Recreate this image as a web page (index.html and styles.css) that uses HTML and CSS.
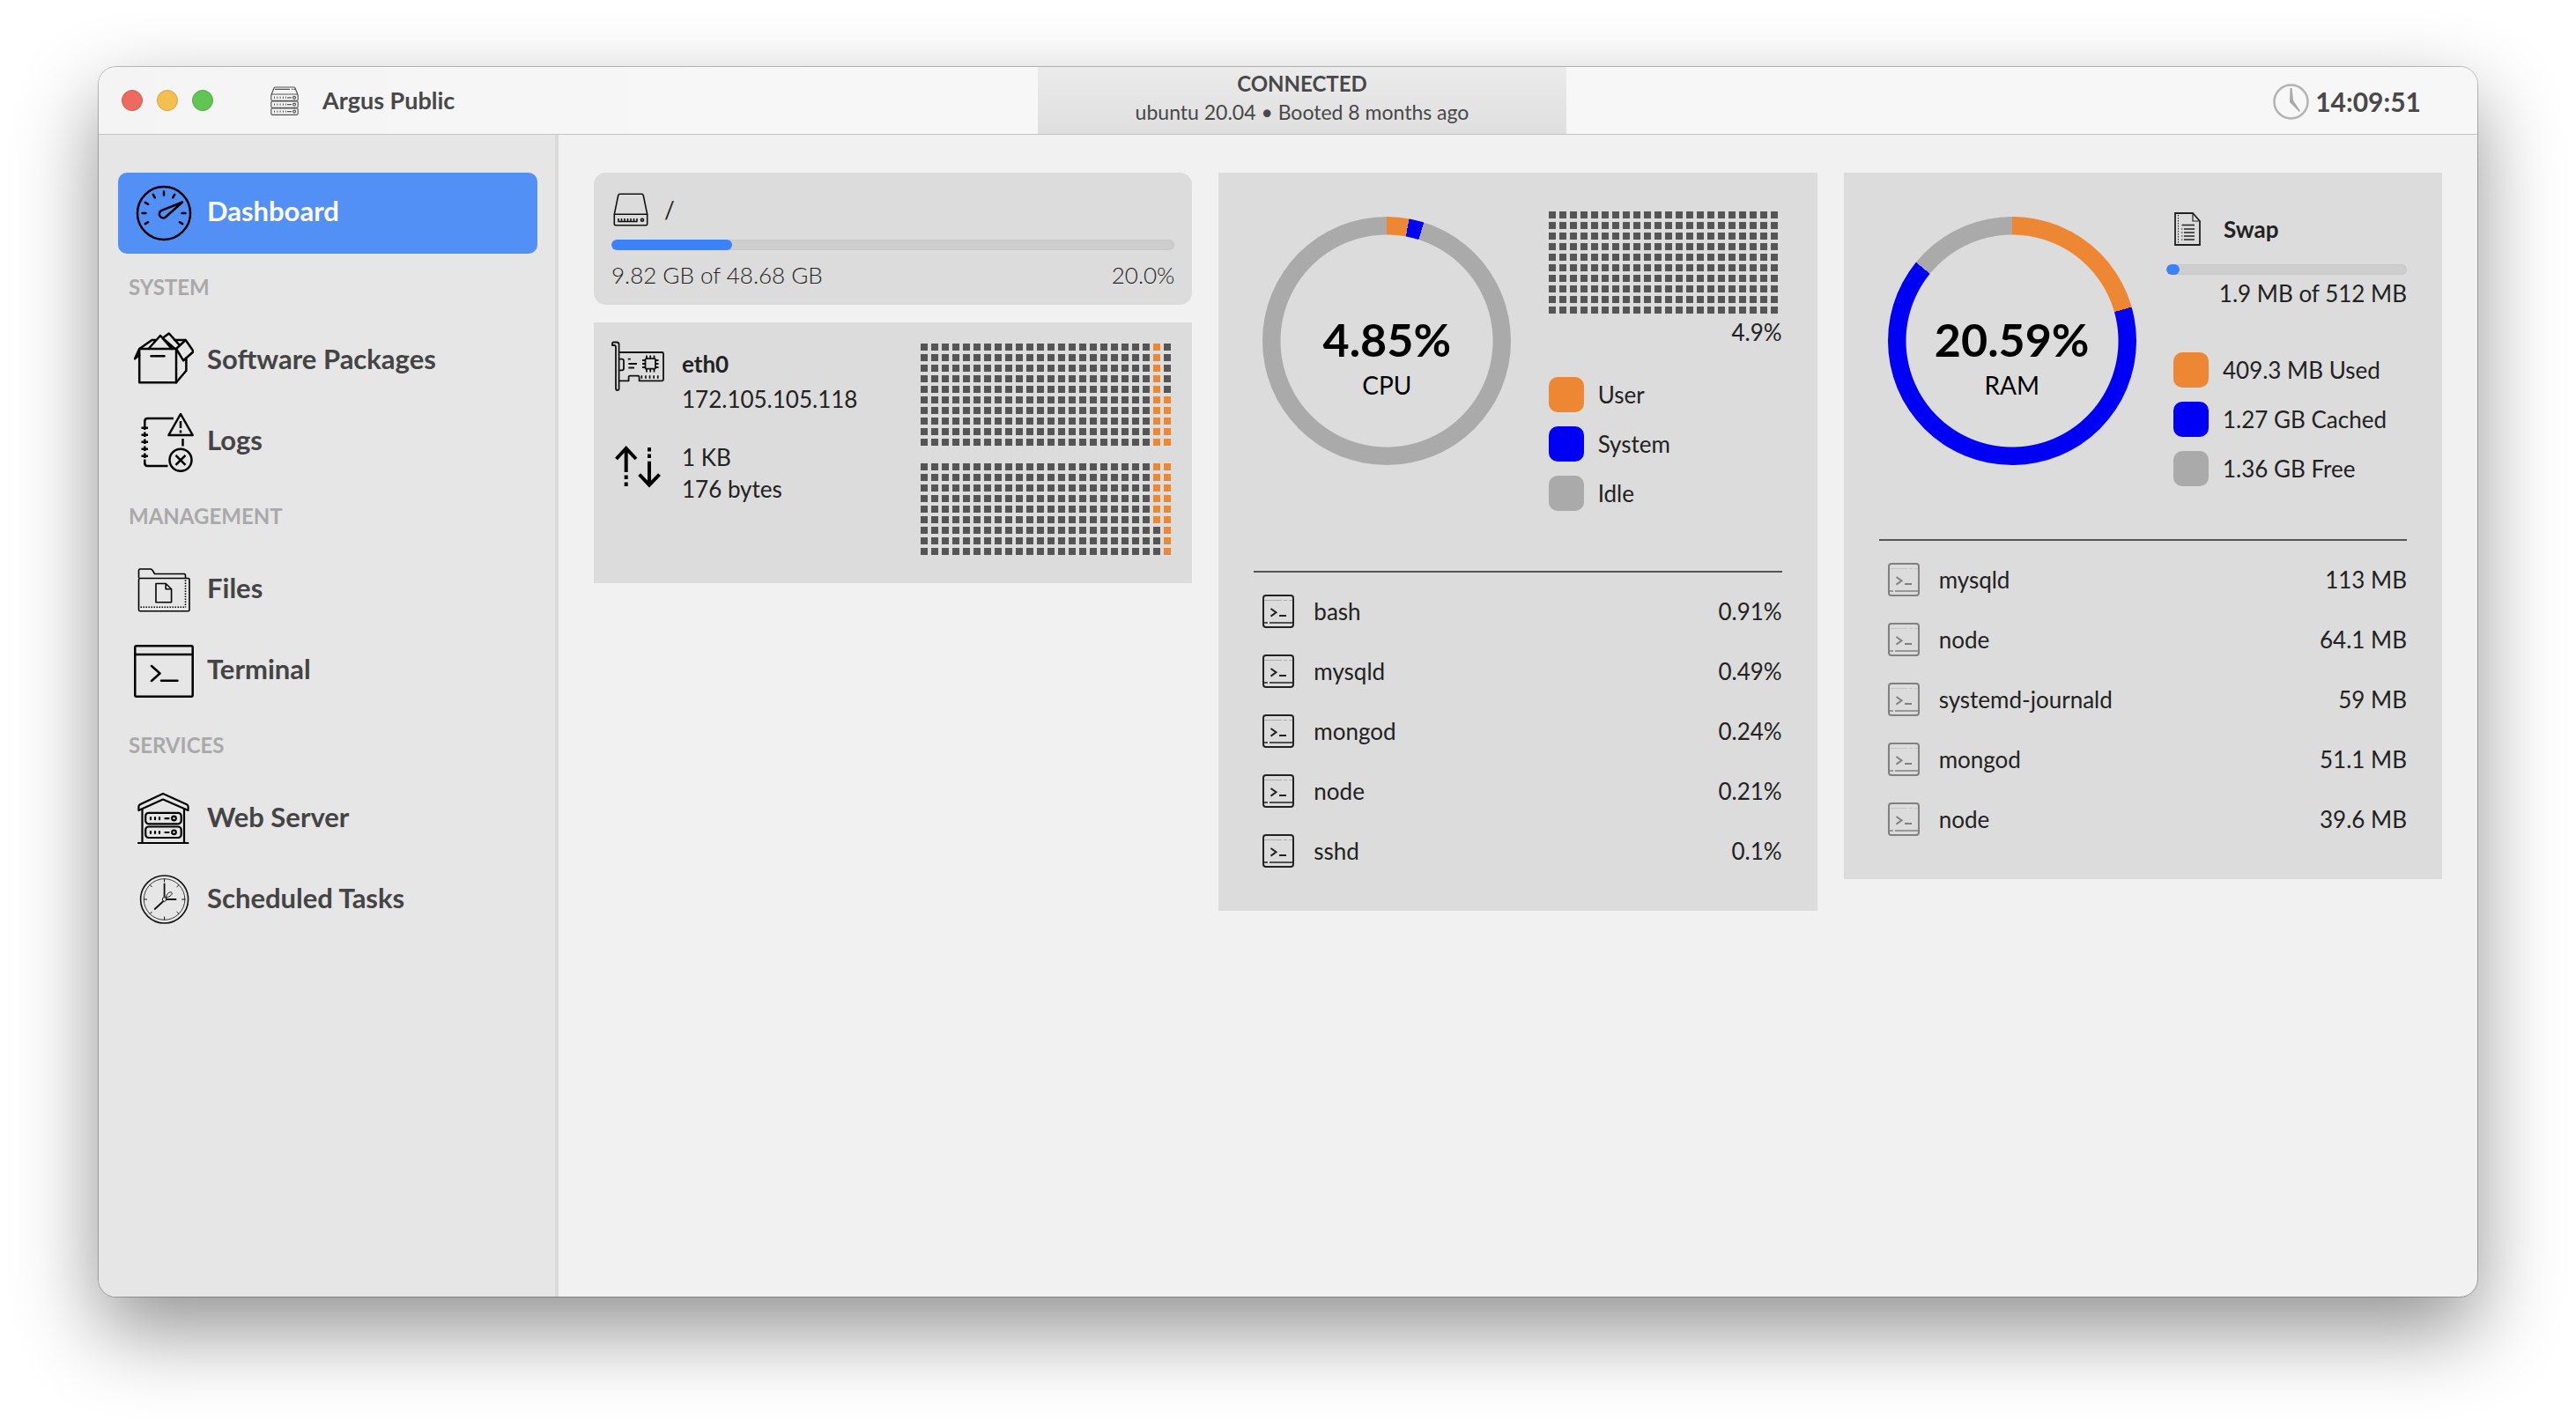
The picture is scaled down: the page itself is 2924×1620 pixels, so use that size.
FILE: index.html
```html
<!DOCTYPE html>
<html lang="en">
<head>
<meta charset="utf-8">
<title>Argus Public</title>
<link rel="stylesheet" href="styles.css">
</head>
<body>
<svg class="defs" width="0" height="0" aria-hidden="true">
  <defs>
    <pattern id="dots-off" width="12" height="12" patternUnits="userSpaceOnUse"><rect width="8" height="8" fill="#555"/></pattern>
    <pattern id="dots-on" width="12" height="12" patternUnits="userSpaceOnUse"><rect width="12" height="12" fill="#dcdcdc"/><rect width="8" height="8" fill="#ee8733"/></pattern>
    <symbol id="process" viewBox="0 0 36 38">
      <g fill="none" stroke="currentColor">
        <rect x="1" y="1" width="34" height="36" rx="3" stroke-width="2"/>
        <path d="M2 6.500h20M24 6.500h4M30 6.500h4" opacity=".25"/>
        <path d="M2 32h4M8 32h26" stroke-width="1.300"/>
        <path d="M9.500 16l6 4.300-6 4.300" stroke-width="2"/>
        <path d="M19 24h8" stroke-width="2"/>
      </g>
    </symbol>
  </defs>
</svg>

<div class="window">
  <header class="titlebar">
    <div class="titlebar-left">
      <div class="lights">
        <button class="light light-close" type="button" aria-label="Close"></button>
        <button class="light light-min" type="button" aria-label="Minimize"></button>
        <button class="light light-zoom" type="button" aria-label="Zoom"></button>
      </div>
      <svg class="server-icon" viewBox="0 0 32 33" aria-hidden="true">
        <g fill="none" stroke="#555" stroke-width="1.200">
          <path d="M1 9.500L4 2Q4.500 1 5.500 1h21q1 0 1.500 1l3 7.500"/>
          <path d="M5 3.300h17M24 3.300h1.500M26.500 3.300h1.500"/>
          <rect x=".8" y="9" width="30.400" height="7.300" rx="1.500"/>
          <rect x=".8" y="17" width="30.400" height="7.300" rx="1.500"/>
          <rect x=".8" y="25" width="30.400" height="7.300" rx="1.500"/>
          <path d="M4 12.800h14M4 20.600h14M4 28.600h14" stroke-width="2.400" stroke-dasharray="1 2.300"/>
          <path d="M19 12.800h5M19 20.600h5M19 28.600h5"/>
          <circle cx="27" cy="12.800" r="1.500"/><circle cx="27" cy="20.600" r="1.500"/><circle cx="27" cy="28.600" r="1.500"/>
        </g>
      </svg>
      <h1 class="title">Argus Public</h1>
    </div>
    <div class="status">
      <p class="status-state">CONNECTED</p>
      <p class="status-info">ubuntu 20.04 • Booted 8 months ago</p>
    </div>
    <div class="titlebar-right">
      <svg class="clock-icon" viewBox="0 0 41 41" aria-hidden="true">
        <circle cx="20.500" cy="20.500" r="19" fill="none" stroke="#b3b3b3" stroke-width="2.500"/>
        <path d="M19.500 5h2l1.500 14 8 12-1 1-11-11z" fill="#a9a9a9"/>
      </svg>
      <time class="clock">14:09:51</time>
    </div>
  </header>

  <div class="body">
    <nav class="sidebar" aria-label="Sections">
      <a class="nav-item nav-item-active" href="#dashboard" aria-current="page">
        <svg class="nav-icon" viewBox="0 0 68 68" aria-hidden="true">
          <g fill="none" stroke="#000" stroke-width="2.500" stroke-linecap="round" stroke-linejoin="round">
            <circle cx="34" cy="34" r="30"/>
            <path d="M34 13.500V9.500M23.800 16.300l-2-3.400M16.200 23.800l-3.400-2M13.500 34H9.500M16.200 44.200l-3.400 2M44.200 16.300l2-3.400M54.500 34h4M51.800 44.200l3.400 2"/>
            <path d="M55 21.500L31.500 30.800A4.500 4.500 0 1 0 37 37.500z"/>
          </g>
        </svg>
        <span>Dashboard</span>
      </a>

      <h2 class="nav-heading">SYSTEM</h2>
      <a class="nav-item" href="#packages">
        <svg class="nav-icon" viewBox="0 0 68 68" aria-hidden="true">
          <g fill="none" stroke="#000" stroke-width="2.500" stroke-linejoin="round" stroke-linecap="round">
            <path d="M6.200 20H48v38.300H6.200zM19.500 28.300h15"/>
            <path d="M6.200 20L1 31.300 6.200 27M6.200 20L20.500 10h5M16.600 20L30 5l13 15"/>
            <path d="M33 7.500l6.800-5 11.800 13.200M34.500 9.500L46 19.500M46 10h12.700l9 13-11.500 10.300L48 20 58.700 10"/>
            <path d="M59.400 30.500v14.200L48 58.300"/>
          </g>
        </svg>
        <span>Software Packages</span>
      </a>
      <a class="nav-item" href="#logs">
        <svg class="nav-icon" viewBox="0 0 68 68" aria-hidden="true">
          <g fill="none" stroke="#000" stroke-width="2.500" stroke-linejoin="round">
            <path d="M45 7H15.500q-3.200 0-3.200 3.200V20M12.300 22.500v5.500M12.300 30.500v5.500M12.300 38.500v5.500M12.300 46.500v5.500M12.300 53.500v4.300q0 3.200 3.200 3.200h23"/>
            <path d="M8.500 17.700H16M8.500 25.700H16M8.500 33.700H16M8.500 41.700H16M8.500 49.700H16M55.500 30v8.500"/>
            <path d="M53 2l13.700 24H39.400zM53 10v8M53 20.500v3"/>
            <circle cx="53" cy="54.300" r="12.500"/>
            <path d="M47.500 48.800l11 11M58.500 48.800l-11 11"/>
          </g>
        </svg>
        <span>Logs</span>
      </a>

      <h2 class="nav-heading">MANAGEMENT</h2>
      <a class="nav-item" href="#files">
        <svg class="nav-icon" viewBox="0 0 68 68" aria-hidden="true">
          <g fill="none" stroke="#000" stroke-width="1.600" stroke-linejoin="round">
            <path d="M5.500 20v-8.500q0-1.500 1.500-1.500h11.500q2 0 3 2l2 3.500H57q1.500 0 1.500 1.500v3"/>
            <rect x="5.500" y="20.500" width="57.500" height="37.200" rx="1.500"/>
            <path d="M25 26.500h11.200l6.400 6.200v15H25zM36.200 26.500v6.200h6.400"/>
            <path d="M58.500 22.500v31M7.500 53.300h51" stroke-dasharray="1.500 1.500"/>
          </g>
        </svg>
        <span>Files</span>
      </a>
      <a class="nav-item" href="#terminal">
        <svg class="nav-icon" viewBox="0 0 68 68" aria-hidden="true">
          <g fill="none" stroke="#000" stroke-width="2.500" stroke-linejoin="round" stroke-linecap="round">
            <rect x="1.300" y="5.200" width="65.400" height="57.500" rx="1.500"/>
            <path d="M1.300 15h65.400M20 28l9.500 8.500L20 45M31 44.700h18.500"/>
          </g>
        </svg>
        <span>Terminal</span>
      </a>

      <h2 class="nav-heading">SERVICES</h2>
      <a class="nav-item" href="#web">
        <svg class="nav-icon" viewBox="0 0 68 68" aria-hidden="true">
          <g fill="none" stroke="#000" stroke-width="2.200" stroke-linejoin="round" stroke-linecap="round">
            <path d="M33 5L60 17.300q1.600.8 1.600 2.500V24L33 11.500 5.400 24V19.800q0-1.700 1.600-2.500z"/>
            <path d="M9.500 23v38M57 23v38M5 61h56.500"/>
            <rect x="13.200" y="26.800" width="40.500" height="12.500" rx="3.500"/>
            <rect x="13.200" y="42.500" width="40.500" height="12.500" rx="3.500"/>
            <path d="M19 32.200v2M24 32.200v2M29 32.200v2M35.500 33.200h4M19 48v2M24 48v2M29 48v2M35.500 49h4"/>
            <circle cx="45.500" cy="33" r="2.300"/><circle cx="45.500" cy="48.800" r="2.300"/>
          </g>
        </svg>
        <span>Web Server</span>
      </a>
      <a class="nav-item" href="#tasks">
        <svg class="nav-icon" viewBox="0 0 68 68" aria-hidden="true">
          <g fill="none" stroke="#111" stroke-linecap="round">
            <circle cx="34.600" cy="33" r="27" stroke-width="1.600"/>
            <circle cx="34.600" cy="33" r="23.300" stroke-width=".8"/>
            <path d="M34.600 10v3M34.600 53v3M11.600 33h3M54.600 33h3M18.300 16.700l2 2M50.900 16.700l-2 2M18.300 49.300l2-2M50.900 49.300l-2-2" stroke-width="1"/>
            <path d="M34.600 30V15.500M37.500 33H47.500M33 35.500L23.700 44" stroke-width="1.800"/>
            <circle cx="34.600" cy="33" r="2.300" stroke-width="1"/>
            <path d="M36.500 31c0-4 4-7 6-6s0 5-6 6" stroke-width="1"/>
          </g>
        </svg>
        <span>Scheduled Tasks</span>
      </a>
    </nav>

    <main class="main">
      <div class="column">
        <section class="card disk">
          <div class="disk-name">
            <svg class="disk-icon" viewBox="0 0 40 38" aria-hidden="true">
              <g fill="none" stroke="#111" stroke-width="1.600" stroke-linejoin="round">
                <path d="M1.300 24.300L5.700 3q.4-1.700 2-1.700h24.600q1.600 0 2 1.700l4.400 21.300z"/>
                <path d="M1.300 24.300v11q0 1.500 1.500 1.500h34.400q1.500 0 1.500-1.500v-11"/>
                <path d="M6 29v3.500h21V29M9.500 29v3M13 29v3M16.500 29v3M20 29v3M23.500 29v3"/>
                <circle cx="33" cy="30.800" r="1.500"/>
              </g>
            </svg>
            <label for="disk-usage">/</label>
          </div>
          <progress class="bar" id="disk-usage" value="21.5" max="100"></progress>
          <div class="disk-figures"><span>9.82 GB of 48.68 GB</span><span>20.0%</span></div>
        </section>

        <section class="card net">
          <div class="net-facts">
            <svg class="net-icon" viewBox="0 0 60 60" aria-hidden="true">
              <g fill="none" stroke="#111" stroke-width="1.800" stroke-linejoin="round">
                <path d="M1 6V4q0-1.500 1.500-1.500H6q2.600 0 2.600 2.600V55q0 2-1.800 2T5 55V8Q5 6 3 6z"/>
                <path d="M8.600 14h48.900q1.500 0 1.500 1.500v29.300q0 1.500-1.500 1.500H31.600v-4.100q0-1.500-1.500-1.500h-9q-1.500 0-1.500 1.500v4.100H8.600"/>
                <path d="M8.600 21.700H12q2 0 2 2v8.600q0 2-2 2H8.600"/>
                <path d="M19.400 27h9.600M19.400 31.500h6.600M18.800 21.700h3"/>
                <rect x="38.500" y="21.200" width="11.500" height="11.500" rx="1"/>
                <path d="M40 21v-3.500M44.200 21v-3.500M48.500 21v-3.500M40 33v3.500M44.200 33v3.500M48.500 33v3.500M38.500 23h-3.500M38.500 27h-3.500M38.500 31h-3.500M50 23h3.500M50 27h3.500M50 31h3.500"/>
                <path d="M33.500 42h21" stroke-width="3.500" stroke-dasharray="1.700 2.900"/>
              </g>
            </svg>
            <div class="net-address">
              <h2 class="net-name">eth0</h2>
              <p>172.105.105.118</p>
            </div>
            <svg class="net-icon" viewBox="-4 -4 60 60" aria-hidden="true">
              <g fill="none" stroke="#000" stroke-width="4">
                <path d="M12.700 4v27M1.500 16L12.700 4l11.300 12M12.700 34.500v4.500M12.700 42.500v4.500"/>
                <path d="M39 18.700v27M27.700 33.700L39 45.700l11.500-12M39 3v4.500M39 10.500v4.500"/>
              </g>
            </svg>
            <div class="net-traffic">
              <p>1 KB</p>
              <p>176 bytes</p>
            </div>
          </div>
          <div class="net-graphs">
            <svg width="284" height="116" role="img" aria-label="Upload history">
              <rect width="288" height="120" fill="url(#dots-off)"/>
              <rect x="264" width="12" height="120" fill="url(#dots-on)"/>
              <rect x="276" y="60" width="12" height="60" fill="url(#dots-on)"/>
            </svg>
            <svg width="284" height="104" role="img" aria-label="Download history">
              <rect width="288" height="108" fill="url(#dots-off)"/>
              <rect x="264" width="12" height="72" fill="url(#dots-on)"/>
              <rect x="276" width="12" height="108" fill="url(#dots-on)"/>
            </svg>
          </div>
        </section>
      </div>

      <section class="card meter meter-cpu">
        <div class="meter-head">
          <div class="ring ring-cpu">
            <strong class="ring-value">4.85%</strong>
            <span class="ring-label">CPU</span>
          </div>
          <div class="meter-side">
            <div class="cpu-history">
              <svg width="260" height="116" role="img" aria-label="CPU history"><rect width="264" height="120" fill="url(#dots-off)"/></svg>
              <p class="side-figure">4.9%</p>
            </div>
            <ul class="legend">
              <li><span class="swatch swatch-a"></span>User</li>
              <li><span class="swatch swatch-b"></span>System</li>
              <li><span class="swatch swatch-c"></span>Idle</li>
            </ul>
          </div>
        </div>
        <table class="processes">
          <tbody>
            <tr><td class="p-icon"><svg><use href="#process"/></svg></td><td>bash</td><td class="p-value">0.91%</td></tr>
            <tr><td class="p-icon"><svg><use href="#process"/></svg></td><td>mysqld</td><td class="p-value">0.49%</td></tr>
            <tr><td class="p-icon"><svg><use href="#process"/></svg></td><td>mongod</td><td class="p-value">0.24%</td></tr>
            <tr><td class="p-icon"><svg><use href="#process"/></svg></td><td>node</td><td class="p-value">0.21%</td></tr>
            <tr><td class="p-icon"><svg><use href="#process"/></svg></td><td>sshd</td><td class="p-value">0.1%</td></tr>
          </tbody>
        </table>
      </section>

      <section class="card meter meter-ram">
        <div class="meter-head">
          <div class="ring ring-ram">
            <strong class="ring-value">20.59%</strong>
            <span class="ring-label">RAM</span>
          </div>
          <div class="meter-side">
            <div class="swap">
              <div class="swap-name">
                <svg class="swap-icon" viewBox="0 0 30 38" aria-hidden="true">
                  <g fill="none" stroke="#222">
                    <path d="M1 1h20l8 9v27H1z" stroke-width="1.800"/>
                    <path d="M21 1v9h8" stroke-width="1.200"/>
                    <path d="M4.500 3v32" stroke-dasharray="1.500 1.500"/>
                    <path d="M8.500 14.500h14.500M11 19h12M11 23h12M11 27h12M11 31h12" stroke-width="1.500"/>
                    <path d="M8 19h1.500M8 23h1.500M8 27h1.500M8 31h1.500"/>
                  </g>
                </svg>
                <label for="swap-usage">Swap</label>
              </div>
              <progress class="bar" id="swap-usage" value="5.5" max="100"></progress>
              <p class="side-figure">1.9 MB of 512 MB</p>
            </div>
            <ul class="legend">
              <li><span class="swatch swatch-a"></span>409.3 MB Used</li>
              <li><span class="swatch swatch-b"></span>1.27 GB Cached</li>
              <li><span class="swatch swatch-c"></span>1.36 GB Free</li>
            </ul>
          </div>
        </div>
        <table class="processes processes-dim">
          <tbody>
            <tr><td class="p-icon"><svg><use href="#process"/></svg></td><td>mysqld</td><td class="p-value">113 MB</td></tr>
            <tr><td class="p-icon"><svg><use href="#process"/></svg></td><td>node</td><td class="p-value">64.1 MB</td></tr>
            <tr><td class="p-icon"><svg><use href="#process"/></svg></td><td>systemd-journald</td><td class="p-value">59 MB</td></tr>
            <tr><td class="p-icon"><svg><use href="#process"/></svg></td><td>mongod</td><td class="p-value">51.1 MB</td></tr>
            <tr><td class="p-icon"><svg><use href="#process"/></svg></td><td>node</td><td class="p-value">39.6 MB</td></tr>
          </tbody>
        </table>
      </section>
    </main>
  </div>
</div>
</body>
</html>
```
FILE: styles.css
```css
:root {
  --text: #222;
  --soft: #484848;
  --card: #dcdcdc;
  --orange: #ee8733;
  --blue: #0000f5;
  --grey: #aaa;
}

* { box-sizing: border-box; }

body {
  margin: 0;
  padding: 76px 112px 148px;
  min-height: 100vh;
  display: flex;
  background: #fff;
  color: var(--text);
  font: 26px/36px Lato, "Noto Sans", sans-serif;
}

h1, h2, p, ul { margin: 0; padding: 0; }
ul { list-style: none; }
svg { display: block; flex: none; }
.defs { position: absolute; }

.window {
  flex: 1;
  min-width: 0;
  display: flex;
  flex-direction: column;
  border-radius: 20px;
  overflow: hidden;
  background: #f1f1f1;
  box-shadow: 0 0 0 1px rgba(0, 0, 0, .24), 0 38px 94px rgba(0, 0, 0, .43);
}

/* Title bar */
.titlebar {
  display: grid;
  grid-template-columns: 1066fr 600px 1034fr;
  height: 77px;
  flex: none;
  border-bottom: 1px solid #c4c4c4;
  background: linear-gradient(90deg, #f4f4f4, #f7f7f7 30%);
  color: var(--soft);
}
.titlebar-left { display: flex; align-items: center; padding-left: 26px; }
.lights { display: flex; gap: 16px; margin-right: 65px; }
.light {
  width: 24px;
  height: 24px;
  padding: 0;
  border: 1px solid;
  border-radius: 50%;
}
.light-close { background: #ec6a5f; border-color: #d65a4f; }
.light-min { background: #f5bf4f; border-color: #d9a43f; }
.light-zoom { background: #61c554; border-color: #52ab44; }
.server-icon { width: 32px; height: 33px; margin-right: 27px; }
.title { font-size: 27px; font-weight: 700; }
.status {
  padding-top: 2px;
  text-align: center;
  background: linear-gradient(#ebebeb, #dfdfdf);
}
.status-state { font-size: 24px; font-weight: 700; line-height: 33px; }
.status-info { font-size: 23px; line-height: 33px; }
.titlebar-right {
  display: flex;
  align-items: center;
  justify-content: flex-end;
  gap: 7px;
  padding: 2px 64px 0 0;
}
.clock-icon { width: 41px; height: 41px; }
.clock { font-size: 30px; font-weight: 700; }

/* Sidebar */
.body { flex: 1; display: flex; }
.sidebar {
  flex: none;
  width: 522px;
  padding: 43px 20px 43px 22px;
  border-right: 4px solid #dadada;
  background: #e6e6e6;
}
.nav-item {
  display: flex;
  align-items: center;
  gap: 15px;
  height: 92px;
  padding-left: 18px;
  border-radius: 10px;
  color: #444;
  font-size: 31px;
  font-weight: 700;
  text-decoration: none;
}
.nav-item span { padding-bottom: 6px; }
.nav-item-active { background: #5290f5; color: #fff; }
.nav-icon { width: 68px; height: 68px; }
.nav-heading {
  padding: 0 12px;
  color: #a9a9a9;
  font-size: 24px;
  font-weight: 700;
  line-height: 76px;
}

/* Cards */
.main {
  flex: 1;
  min-width: 0;
  display: grid;
  grid-template-columns: repeat(3, minmax(0, 1fr));
  align-items: start;
  gap: 30px;
  padding: 43px 40px;
}
.column { display: grid; gap: 20px; }
.card { background: var(--card); }

.bar {
  -webkit-appearance: none;
  appearance: none;
  display: block;
  width: 100%;
  height: 12px;
  border: 0;
  border-radius: 6px;
  overflow: hidden;
  background: #cecece;
}
.bar::-webkit-progress-bar { background: #cecece; border-radius: 6px; box-shadow: inset 0 0 2px #bbb; }
.bar::-webkit-progress-value { background: #3b82f7; border-radius: 6px; }

.disk { padding: 23px 20px 16px; border-radius: 14px; }
.disk-name { display: flex; align-items: center; gap: 18px; margin-bottom: 15px; padding-left: 2px; }
.disk-name label { line-height: 38px; }
.disk-icon { width: 40px; height: 38px; }
.disk-figures {
  display: flex;
  justify-content: space-between;
  margin-top: 10px;
  font-weight: 300;
}

.net {
  display: flex;
  justify-content: space-between;
  align-items: flex-start;
  padding: 20px 24px 32px 20px;
}
.net-facts { display: grid; grid-template-columns: 60px auto; gap: 28px 20px; }
.net-icon { width: 60px; height: 60px; }
.net-address { padding-top: 7px; line-height: 40px; }
.net-name { font-size: 26px; font-weight: 700; }
.net-graphs { display: grid; gap: 20px; padding-top: 4px; }

.meter { padding: 44px 40px 34px; }
.meter-head {
  display: flex;
  justify-content: space-between;
  align-items: flex-start;
  border-bottom: 2px solid #555;
}
.meter-cpu .meter-head { padding-bottom: 68px; }
.meter-ram .meter-head { padding-bottom: 60px; }
.meter-side { flex: none; width: 273px; }

.ring {
  flex: none;
  display: flex;
  flex-direction: column;
  align-items: center;
  justify-content: center;
  width: 282px;
  height: 282px;
  margin: 6px 0 0 10px;
  padding-top: 40px;
  border-radius: 50%;
  color: #000;
}
.ring-cpu {
  background:
    radial-gradient(closest-side, var(--card) 120px, transparent 121px),
    conic-gradient(var(--orange) 2.9%, var(--blue) 0 4.85%, var(--grey) 0);
}
.ring-ram {
  background:
    radial-gradient(closest-side, var(--card) 120px, transparent 121px),
    conic-gradient(var(--orange) 20.6%, var(--blue) 0 85.9%, var(--grey) 0);
}
.ring-value { font-size: 52px; line-height: 60px; }
.ring-label { font-size: 28px; line-height: 44px; }

.side-figure { text-align: right; line-height: 42px; }
.cpu-history { padding-left: 8px; margin-bottom: 30px; }
.swap { margin-bottom: 46px; }
.swap-name { display: flex; align-items: center; gap: 26px; margin-bottom: 20px; padding-left: 9px; font-weight: 700; }
.swap-name label { line-height: 40px; }
.swap-icon { width: 30px; height: 38px; }

.legend { display: grid; gap: 16px; padding-left: 8px; }
.legend li { display: flex; align-items: center; gap: 16px; line-height: 40px; white-space: nowrap; }
.swatch { flex: none; width: 40px; height: 40px; border-radius: 10px; }
.swatch-a { background: var(--orange); }
.swatch-b { background: var(--blue); }
.swatch-c { background: var(--grey); }

.processes { width: 100%; margin-top: 10px; border-collapse: collapse; }
.processes td { height: 68px; padding: 0; }
.processes .p-icon { width: 68px; padding-left: 10px; }
.processes svg { width: 36px; height: 38px; color: #222; }
.processes-dim svg { color: #808080; }
.processes .p-value { text-align: right; }
```
